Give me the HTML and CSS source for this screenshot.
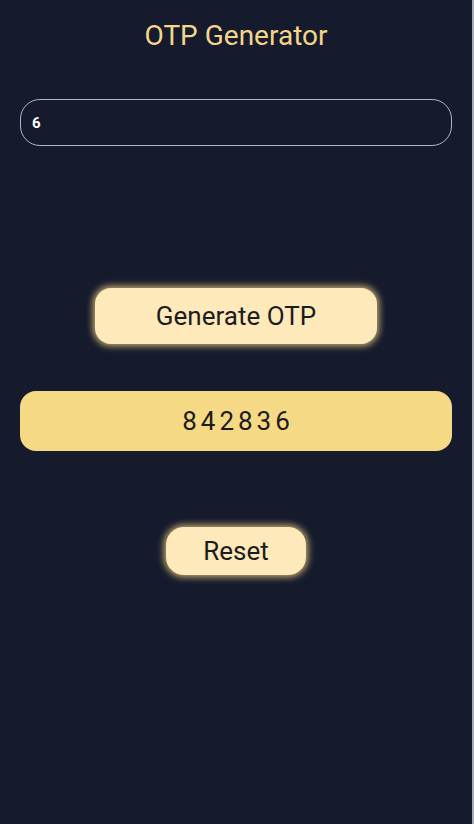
FILE: index.html
```html
<!DOCTYPE html>
<html lang="en">
<head>
<meta charset="utf-8">
<title>OTP Generator</title>
<link rel="stylesheet" href="styles.css">
</head>
<body>
<div class="page">
  <main class="app">
    <h1 class="title">OTP Generator</h1>
    <input class="length-input" type="text" value="6">
    <button class="btn btn-generate">Generate OTP</button>
    <div class="otp-box">842836</div>
    <button class="btn btn-reset">Reset</button>
  </main>
  <div class="scroll-edge"></div>
</div>
</body>
</html>
```
FILE: styles.css
```css
html, body {
  margin: 0;
  padding: 0;
  height: 100%;
  background: #151a2d;
}
body {
  font-family: Roboto, "Noto Sans", sans-serif;
}
.page {
  display: flex;
  min-height: 824px;
}
.app {
  flex: 1;
  display: flex;
  flex-direction: column;
  align-items: center;
  padding: 0 20px;
}
.scroll-edge {
  width: 2px;
  background: #a9abb4;
}
.title {
  margin: 20px 0 0;
  height: 32px;
  line-height: 32px;
  font-size: 28px;
  font-weight: 400;
  color: #f3d58b;
}
.length-input {
  box-sizing: border-box;
  align-self: stretch;
  margin-top: 47px;
  height: 47px;
  border: 1px solid #b3b6c4;
  border-radius: 20px;
  background: transparent;
  color: #ffffff;
  font-family: Roboto, sans-serif;
  font-size: 15px;
  font-weight: 700;
  padding: 0 0 0 11px;
  outline: none;
}
.btn {
  box-sizing: border-box;
  border: none;
  background: #fde9b9;
  color: #1c1c1e;
  font-family: Roboto, sans-serif;
  font-size: 26px;
  font-weight: 400;
  box-shadow: 0 0 7px 2px rgba(246, 214, 130, 0.8);
  cursor: pointer;
}
.btn-generate {
  margin-top: 142px;
  width: 282px;
  height: 56px;
  border-radius: 16px;
}
.otp-box {
  box-sizing: border-box;
  align-self: stretch;
  margin-top: 47px;
  height: 60px;
  border-radius: 16px;
  background: #f6d985;
  color: #1c1c1e;
  font-size: 26px;
  letter-spacing: 4px;
  display: flex;
  align-items: center;
  justify-content: center;
  padding-left: 4px;
}
.btn-reset {
  margin-top: 76px;
  width: 140px;
  height: 48px;
  border-radius: 18px;
}
```
